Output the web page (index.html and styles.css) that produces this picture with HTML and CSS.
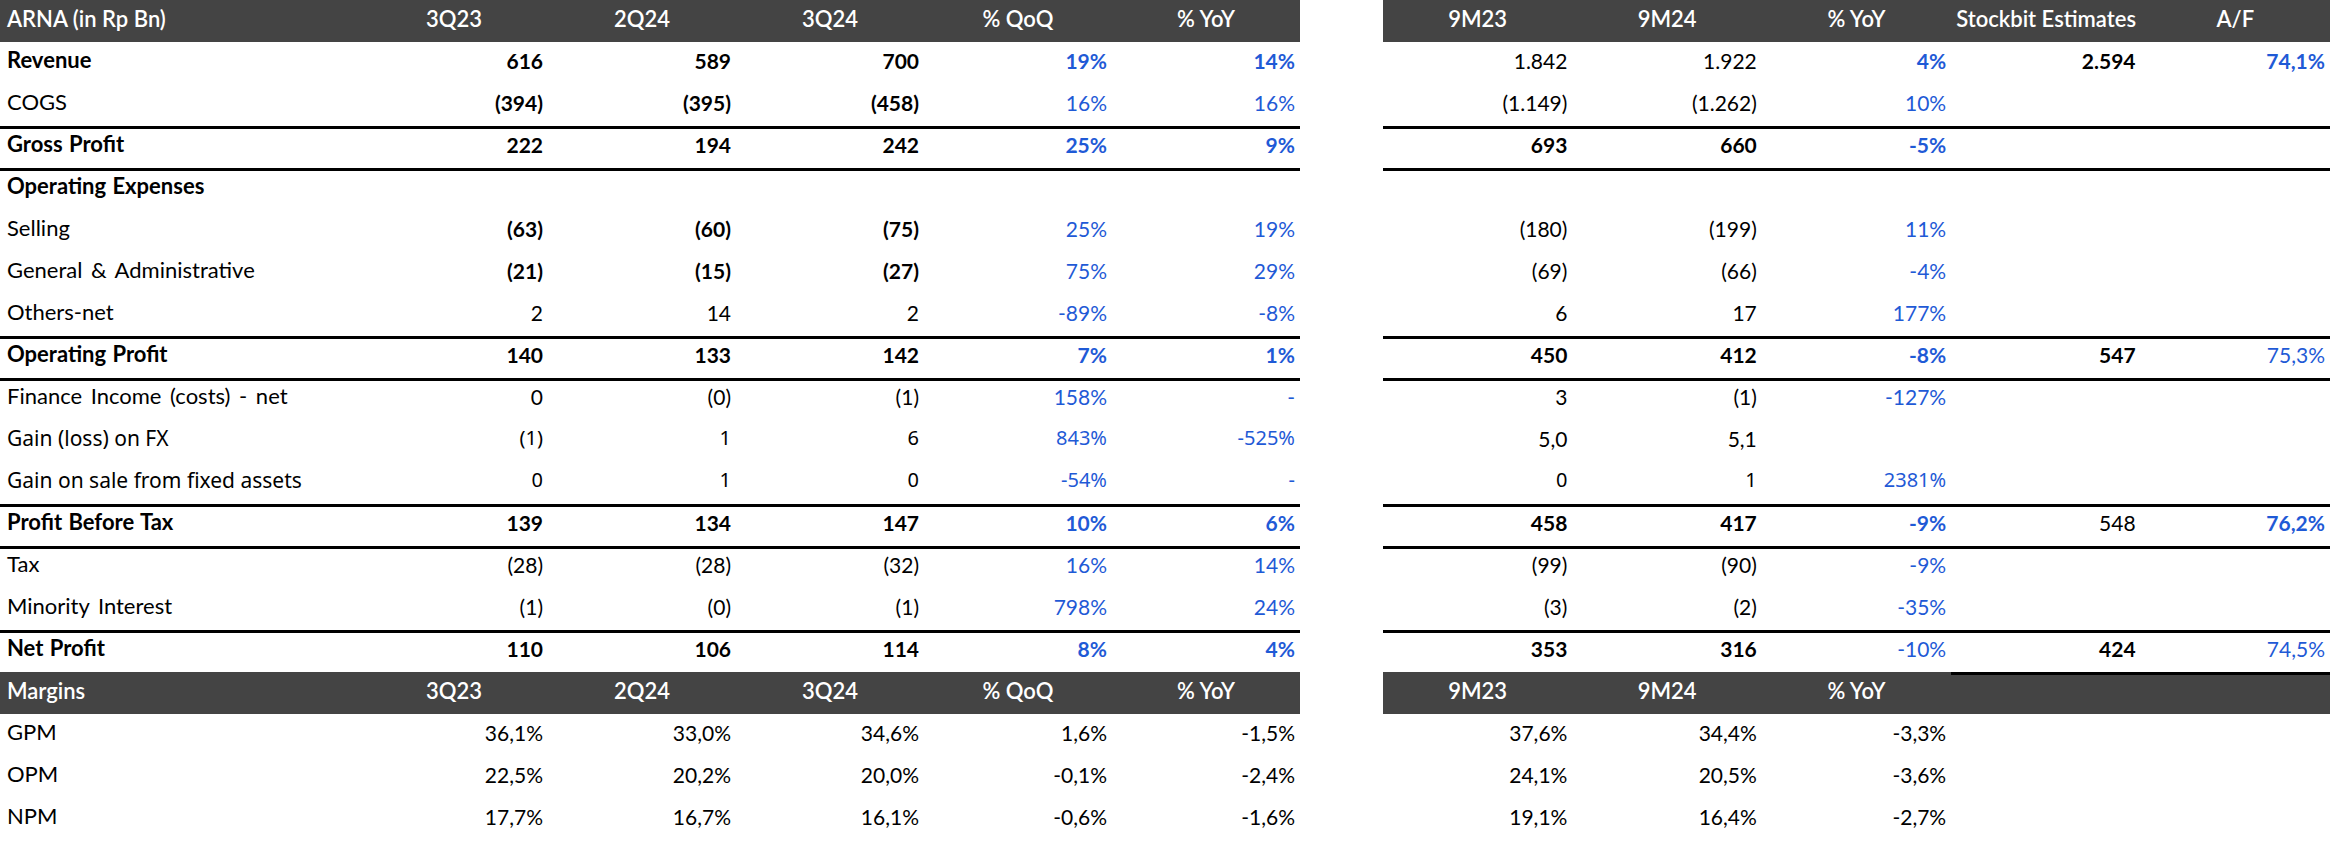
FILE: index.html
```html
<!DOCTYPE html>
<html lang="en">
<head>
<meta charset="utf-8">
<title>ARNA Financials</title>
<link rel="stylesheet" href="styles.css">
</head>
<body>
<div class="page">
  <table class="fin left">
    <colgroup><col class="c-label"><col class="c-num"><col class="c-num"><col class="c-num"><col class="c-num"><col class="c-num"></colgroup>
    <tr class="head"><th class="lbl">ARNA (in Rp Bn)</th><th>3Q23</th><th>2Q24</th><th>3Q24</th><th>% QoQ</th><th>% YoY</th></tr>
    <tr class="b"><td class="lbl">Revenue</td><td>616</td><td>589</td><td>700</td><td class="pct">19%</td><td class="pct">14%</td></tr>
    <tr><td class="lbl">COGS</td><td class="bd">(394)</td><td class="bd">(395)</td><td class="bd">(458)</td><td class="pct">16%</td><td class="pct">16%</td></tr>
    <tr class="b rule"><td class="lbl">Gross Profit</td><td>222</td><td>194</td><td>242</td><td class="pct">25%</td><td class="pct">9%</td></tr>
    <tr class="b rule"><td class="lbl">Operating Expenses</td><td></td><td></td><td></td><td></td><td></td></tr>
    <tr><td class="lbl">Selling</td><td class="bd">(63)</td><td class="bd">(60)</td><td class="bd">(75)</td><td class="pct">25%</td><td class="pct">19%</td></tr>
    <tr><td class="lbl">General &amp; Administrative</td><td class="bd">(21)</td><td class="bd">(15)</td><td class="bd">(27)</td><td class="pct">75%</td><td class="pct">29%</td></tr>
    <tr><td class="lbl">Others-net</td><td>2</td><td>14</td><td>2</td><td class="pct">-89%</td><td class="pct">-8%</td></tr>
    <tr class="b rule"><td class="lbl">Operating Profit</td><td>140</td><td>133</td><td>142</td><td class="pct">7%</td><td class="pct">1%</td></tr>
    <tr class="rule"><td class="lbl">Finance Income (costs) - net</td><td>0</td><td>(0)</td><td>(1)</td><td class="pct">158%</td><td class="pct">-</td></tr>
    <tr class="alt"><td class="lbl">Gain (loss) on FX</td><td>(1)</td><td>1</td><td>6</td><td class="pct">843%</td><td class="pct">-525%</td></tr>
    <tr class="alt"><td class="lbl">Gain on sale from fixed assets</td><td>0</td><td>1</td><td>0</td><td class="pct">-54%</td><td class="pct">-</td></tr>
    <tr class="b rule"><td class="lbl">Profit Before Tax</td><td>139</td><td>134</td><td>147</td><td class="pct">10%</td><td class="pct">6%</td></tr>
    <tr class="rule"><td class="lbl">Tax</td><td>(28)</td><td>(28)</td><td>(32)</td><td class="pct">16%</td><td class="pct">14%</td></tr>
    <tr><td class="lbl">Minority Interest</td><td>(1)</td><td>(0)</td><td>(1)</td><td class="pct">798%</td><td class="pct">24%</td></tr>
    <tr class="b rule"><td class="lbl">Net Profit</td><td>110</td><td>106</td><td>114</td><td class="pct">8%</td><td class="pct">4%</td></tr>
    <tr class="head"><th class="lbl">Margins</th><th>3Q23</th><th>2Q24</th><th>3Q24</th><th>% QoQ</th><th>% YoY</th></tr>
    <tr><td class="lbl">GPM</td><td>36,1%</td><td>33,0%</td><td>34,6%</td><td>1,6%</td><td>-1,5%</td></tr>
    <tr><td class="lbl">OPM</td><td>22,5%</td><td>20,2%</td><td>20,0%</td><td>-0,1%</td><td>-2,4%</td></tr>
    <tr><td class="lbl">NPM</td><td>17,7%</td><td>16,7%</td><td>16,1%</td><td>-0,6%</td><td>-1,6%</td></tr>
  </table>

  <table class="fin right">
    <colgroup><col class="c-r"><col class="c-r"><col class="c-r"><col class="c-r"><col class="c-r"></colgroup>
    <tr class="head"><th>9M23</th><th>9M24</th><th>% YoY</th><th>Stockbit Estimates</th><th>A/F</th></tr>
    <tr class="b"><td class="rg">1.842</td><td class="rg">1.922</td><td class="pct">4%</td><td>2.594</td><td class="pct">74,1%</td></tr>
    <tr><td>(1.149)</td><td>(1.262)</td><td class="pct">10%</td><td></td><td></td></tr>
    <tr class="b rule"><td>693</td><td>660</td><td class="pct">-5%</td><td></td><td></td></tr>
    <tr class="rule"><td></td><td></td><td></td><td></td><td></td></tr>
    <tr><td>(180)</td><td>(199)</td><td class="pct">11%</td><td></td><td></td></tr>
    <tr><td>(69)</td><td>(66)</td><td class="pct">-4%</td><td></td><td></td></tr>
    <tr><td>6</td><td>17</td><td class="pct">177%</td><td></td><td></td></tr>
    <tr class="b rule"><td>450</td><td>412</td><td class="pct">-8%</td><td>547</td><td class="pct rg">75,3%</td></tr>
    <tr class="rule"><td>3</td><td>(1)</td><td class="pct">-127%</td><td></td><td></td></tr>
    <tr><td>5,0</td><td>5,1</td><td></td><td></td><td></td></tr>
    <tr class="alt"><td>0</td><td>1</td><td class="pct">2381%</td><td></td><td></td></tr>
    <tr class="b rule"><td>458</td><td>417</td><td class="pct">-9%</td><td class="rg">548</td><td class="pct">76,2%</td></tr>
    <tr class="rule"><td>(99)</td><td>(90)</td><td class="pct">-9%</td><td></td><td></td></tr>
    <tr><td>(3)</td><td>(2)</td><td class="pct">-35%</td><td></td><td></td></tr>
    <tr class="b rule"><td>353</td><td>316</td><td class="pct rg">-10%</td><td>424</td><td class="pct rg">74,5%</td></tr>
    <tr class="head"><th>9M23</th><th>9M24</th><th>% YoY</th><th class="cap"></th><th class="cap"></th></tr>
    <tr><td>37,6%</td><td>34,4%</td><td>-3,3%</td><td></td><td></td></tr>
    <tr><td>24,1%</td><td>20,5%</td><td>-3,6%</td><td></td><td></td></tr>
    <tr><td>19,1%</td><td>16,4%</td><td>-2,7%</td><td></td><td></td></tr>
  </table>
</div>
</body>
</html>
```

FILE: styles.css
```css
html, body {
  margin: 0;
  padding: 0;
  background: #ffffff;
}

.page {
  display: flex;
  gap: 83px;
  align-items: flex-start;
  font-family: Lato, "Liberation Sans", sans-serif;
  font-size: 21px;
  color: #000000;
}

.fin {
  border-collapse: collapse;
  border-spacing: 0;
  table-layout: fixed;
}

.fin.left { width: 1300px; }
.fin.right { width: 947px; }

.c-label { width: 360px; }
.c-num { width: 188px; }
.c-r { width: 189.4px; }

.fin tr { height: 42px; }

.fin td, .fin th {
  padding: 0 5px 6px 5px;
  height: 42px;
  box-sizing: border-box;
  vertical-align: middle;
  text-align: right;
  white-space: nowrap;
  line-height: 1;
  font-weight: 400;
}

.fin td.lbl, .fin th.lbl {
  text-align: left;
  padding-left: 7px;
}

.fin td.lbl {
  font-size: 22px;
  word-spacing: 3px;
}

.fin tr.head th {
  background: #444444;
  color: #ffffff;
  text-align: center;
  font-weight: 600;
  font-size: 22px;
  padding-bottom: 4px;
}

.fin tr.head th.lbl { text-align: left; }

.fin tr.head th.cap {
  box-shadow: inset 0 3px 0 #000000;
}

.fin tr.b td { font-weight: 700; }
.fin tr.b td.rg { font-weight: 400; }
.fin td.bd { font-weight: 700; }
.fin tr.b td.lbl { word-spacing: 1px; }

.fin td.pct { color: #1f5ad6; }

.fin tr.rule td {
  box-shadow: inset 0 3px 0 #000000;
}

.fin tr.alt td {
  font-family: "Noto Sans", Lato, sans-serif;
  font-size: 20px;
}

.fin tr.alt td.lbl {
  font-size: 21px;
  word-spacing: 0;
}
```
